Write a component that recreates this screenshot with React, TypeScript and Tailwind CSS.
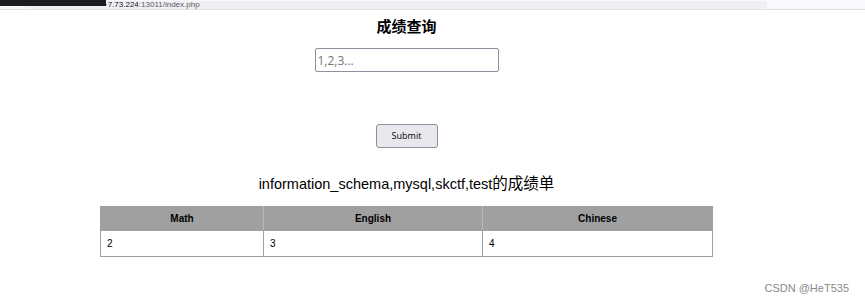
export default function App() {
  return (
    <div className="w-[865px] h-[305px] bg-white overflow-hidden relative" style={{ fontFamily: '"Liberation Sans", Arial, "Noto Sans CJK SC", sans-serif' }}>
      {/* cropped browser bar */}
      <div className="h-[10px] bg-[#f9f9fb] border-b border-[#e0e0e6] flex items-end relative">
        <div className="absolute left-0 top-0 h-[6px] w-[106px] bg-[#1c1b22]" />
        <div className="ml-[25px] w-[742px] h-[8px] bg-[#f0f0f4] rounded-b-[3px] text-[8px] leading-[8px] text-[#5b5b66] pl-[80px] overflow-hidden">
          <span className="text-[#15141a]">·7.73.224</span>
          <span>:13011/index.php</span>
        </div>
      </div>

      <div className="w-[813px] flex flex-col items-center">
        <h1 className="mt-[6px] text-[15px] leading-[20px] font-bold text-black" style={{ fontFamily: '"Noto Sans CJK SC", sans-serif' }}>
          成绩查询
        </h1>
        <input
          type="text"
          placeholder="1,2,3..."
          className="mt-[12px] w-[184px] h-[24px] border border-[#8f8f9d] rounded-[2px] px-[2px] text-[12px] text-black placeholder:text-[#757575] outline-none"
          style={{ fontFamily: '"Open Sans", sans-serif' }}
        />
        <button
          type="button"
          className="mt-[52px] w-[62px] h-[24px] bg-[#e9e9ed] border border-[#8f8f9d] rounded-[3px] text-[9px] text-black"
          style={{ fontFamily: '"Open Sans", sans-serif' }}
        >
          Submit
        </button>
        <p className="mt-[24px] text-[14.5px] leading-[20px] text-black">
          information_schema,mysql,skctf,test<span className="text-[15.5px]" style={{ fontFamily: '"Noto Sans CJK SC", sans-serif' }}>的成绩单</span>
        </p>
        <table className="mt-[12px] w-[613px] border-collapse border border-[#a0a0a0] text-[10px] text-black">
          <thead>
            <tr className="bg-[#a0a0a0] h-[24px]">
              <th className="w-[163px] border-y border-l border-[#a0a0a0] border-r-[#b8b8b8] border-r font-bold">Math</th>
              <th className="w-[219px] border-y border-[#a0a0a0] border-r border-r-[#b8b8b8] font-bold">English</th>
              <th className="border border-[#a0a0a0] font-bold">Chinese</th>
            </tr>
          </thead>
          <tbody>
            <tr className="h-[26px]">
              <td className="border border-[#a0a0a0] pl-[6px]">2</td>
              <td className="border border-[#a0a0a0] pl-[6px]">3</td>
              <td className="border border-[#a0a0a0] pl-[6px]">4</td>
            </tr>
          </tbody>
        </table>
      </div>

      <div className="absolute right-[16px] bottom-[9px] text-[11px] text-[#8a8a8a]" style={{ fontFamily: '"Liberation Sans", sans-serif' }}>
        CSDN @HeT535
      </div>
    </div>
  )
}
